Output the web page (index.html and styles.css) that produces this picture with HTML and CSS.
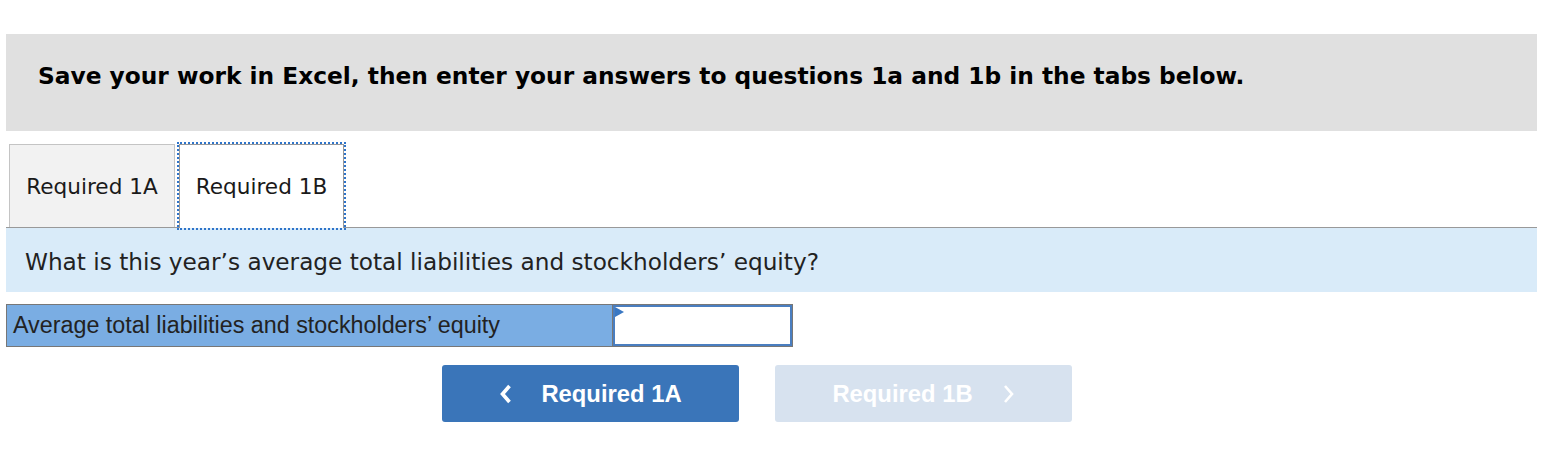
FILE: index.html
```html
<!DOCTYPE html>
<html>
<head>
<meta charset="utf-8">
<link rel="stylesheet" href="styles.css">
</head>
<body>
<div class="page">
  <div class="banner">Save your work in Excel, then enter your answers to questions 1a and 1b in the tabs below.</div>
  <div class="tabs">
    <div class="tab">Required 1A</div>
    <div class="tab active">Required 1B</div>
  </div>
  <div class="question">What is this year’s average total liabilities and stockholders’ equity?</div>
  <div class="row">
    <div class="label">Average total liabilities and stockholders’ equity</div>
    <div class="input"><span class="flag"></span></div>
  </div>
  <div class="nav">
    <div class="btn prev">
      <svg class="chev" width="14" height="20" viewBox="0 0 14 20"><polyline points="10.5,2 3.5,10 10.5,18" fill="none" stroke="#fff" stroke-width="3.6"/></svg>
      <span>Required 1A</span>
    </div>
    <div class="btn next">
      <span>Required 1B</span>
      <svg class="chev" width="14" height="20" viewBox="0 0 14 20"><polyline points="4,2 11,10 4,18" fill="none" stroke="#fff" stroke-width="2.6"/></svg>
    </div>
  </div>
</div>
</body>
</html>
```
FILE: styles.css
```css
html, body {
  margin: 0;
  padding: 0;
  background: #fff;
}
.page {
  padding: 34px 27px 0 6px;
}
.banner {
  background: #e0e0e0;
  height: 97px;
  padding: 30px 0 0 32px;
  line-height: 23px;
  font-family: "DejaVu Sans", Verdana, sans-serif;
  font-weight: bold;
  font-size: 23.3px;
  color: #000;
  box-sizing: border-box;
  white-space: nowrap;
}
.tabs {
  display: flex;
  align-items: flex-end;
  gap: 4px;
  margin-top: 13px;
  padding-left: 3px;
  border-bottom: 1px solid #999;
  height: 83px;
}
.tab {
  box-sizing: border-box;
  height: 83px;
  width: 166px;
  display: flex;
  align-items: center;
  justify-content: center;
  font-family: "DejaVu Sans", Verdana, sans-serif;
  font-size: 21.6px;
  color: #1a1a1a;
  background: #f2f2f2;
  border: 1px solid #c4c4c4;
  border-bottom: none;
}
.tab.active {
  background: #fff;
  width: 165px;
  border-color: #999;
  height: 84px;
  margin-bottom: -1px;
  position: relative;
}
.tab.active::after {
  content: "";
  position: absolute;
  left: -3px;
  right: -3px;
  top: -3px;
  bottom: -2px;
  border: 2px dotted #2f74c9;
  pointer-events: none;
}
.question {
  background: #d9ebf9;
  height: 64px;
  display: flex;
  align-items: center;
  padding-left: 19px;
  padding-top: 3px;
  box-sizing: border-box;
  font-family: "DejaVu Sans", Verdana, sans-serif;
  font-size: 23.2px;
  color: #222;
  white-space: nowrap;
}
.row {
  display: flex;
  margin-top: 12px;
  height: 43px;
}
.label {
  box-sizing: border-box;
  width: 607px;
  background: #7aade3;
  border: 1px solid #777;
  display: flex;
  align-items: center;
  padding-left: 6px;
  font-family: "Liberation Sans", Arial, sans-serif;
  font-size: 23.3px;
  color: #222;
  white-space: nowrap;
}
.input {
  box-sizing: border-box;
  width: 181px;
  margin-left: -1px;
  border: 1px solid #777;
  box-shadow: inset 0 0 0 2px #4a7ec0;
  background: #fff;
  position: relative;
}
.flag {
  position: absolute;
  left: 2px;
  top: 2px;
  width: 0;
  height: 0;
  border-top: 5px solid transparent;
  border-bottom: 5px solid transparent;
  border-left: 9px solid #3a78c3;
}
.nav {
  display: flex;
  gap: 36px;
  margin-top: 18px;
  padding-left: 436px;
}
.btn {
  width: 297px;
  height: 57px;
  border-radius: 3px;
  display: flex;
  align-items: center;
  justify-content: center;
  font-family: "Liberation Sans", Arial, sans-serif;
  font-weight: bold;
  font-size: 23.8px;
  color: #fff;
  gap: 28px;
}
.btn.prev {
  background: #3a75b9;
}
.btn.next {
  background: #d7e2ef;
}
.chev {
  display: block;
}
```
